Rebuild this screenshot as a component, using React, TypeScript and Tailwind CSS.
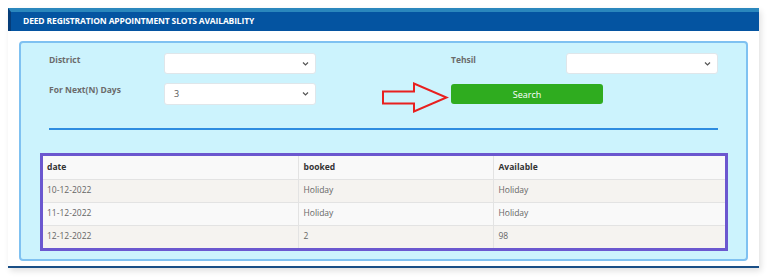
import React from 'react';

const FONT = { fontFamily: '"Open Sans", "Noto Sans", Arial, sans-serif' };

const rows = [
  { date: '10-12-2022', booked: 'Holiday', available: 'Holiday' },
  { date: '11-12-2022', booked: 'Holiday', available: 'Holiday' },
  { date: '12-12-2022', booked: '2', available: '98' },
];

const Chevron = () => (
  <svg width="7" height="5" viewBox="0 0 7 5" className="absolute right-[6px] top-1/2 -translate-y-1/2">
    <path d="M1 1 L3.5 3.5 L6 1" fill="none" stroke="#555" strokeWidth="1.2" />
  </svg>
);

const FakeSelect = ({ value, tall }: { value?: string; tall?: boolean }) => (
  <div className={`relative w-[152px] ${tall ? 'h-[22px]' : 'h-[21px]'} bg-white border border-[#dfe6ea] rounded-[3px] flex items-center pl-[9px] text-[9px] text-[#555]`}>
    {value}
    <Chevron />
  </div>
);

export default function App() {
  return (
    <div className="w-[768px] h-[278px] bg-white pt-[8px] pl-[8px]" style={FONT}>
      <div className="w-[751px] h-[260px] bg-white shadow-[2px_3px_6px_rgba(0,0,0,0.12)] border-b-2 border-[#1a4f86] flex flex-col">
        {/* title bar */}
        <div className="h-[23px] bg-[#0454a1] border-t-[4px] border-t-[#2a87bd] border-l-[3px] border-l-[#053c78] flex items-center pl-[12px]">
          <span className="text-white font-bold text-[8.5px] tracking-[-0.15px] leading-none">
            DEED REGISTRATION APPOINTMENT SLOTS AVAILABILITY
          </span>
        </div>

        {/* panel */}
        <div className="relative mt-[10px] ml-[11px] w-[729px] h-[220px] bg-[#ccf3fd] border-2 border-[#7fc1f1] rounded-[4px] pt-[10px] px-[28px]">
          <div className="grid grid-cols-[267px_267px] gap-x-[135px] gap-y-[9px]">
            <div className="flex items-start">
              <span className="w-[115px] text-[8.5px] font-bold text-[#6b6b6b] pt-[1px]">District</span>
              <FakeSelect />
            </div>
            <div className="flex items-start">
              <span className="w-[115px] text-[8.5px] font-bold text-[#6b6b6b] pt-[1px]">Tehsil</span>
              <FakeSelect />
            </div>
            <div className="flex items-start">
              <span className="w-[115px] text-[8.5px] font-bold text-[#6b6b6b] pt-[1px]">For Next(N) Days</span>
              <FakeSelect value="3" tall />
            </div>
            <div className="flex items-start pt-[1px]">
              <button className="w-[152px] h-[20px] bg-[#2fac1f] rounded-[3px] text-white text-[9px] leading-none">
                Search
              </button>
            </div>
          </div>

          {/* annotation arrow */}
          <svg className="absolute left-[360px] top-[39px]" width="68" height="32" viewBox="0 0 68 32">
            <polygon points="2,9.5 33,9.5 33,1.5 65.5,15.5 33,29.5 33,21.5 2,21.5" fill="none" stroke="#e8201f" strokeWidth="2" strokeLinejoin="miter" />
          </svg>

          <div className="mt-[23px] h-[2px] bg-[#2e8ce0]" />

          {/* results table */}
          <div className="mt-[23px] -ml-[9px] w-[688px] border-[3px] border-[#6b57cf]">
            <table className="w-full border-collapse text-[8.5px]">
              <thead>
                <tr className="h-[23px] bg-[#f9f9f9] border-b border-[#e3e3e3]">
                  <th className="w-[255px] text-left font-bold text-[#333] pl-[4px] border-r border-[#e3e3e3]">date</th>
                  <th className="w-[195px] text-left font-bold text-[#333] pl-[5px] border-r border-[#e3e3e3]">booked</th>
                  <th className="text-left font-bold text-[#333] pl-[5px]">Available</th>
                </tr>
              </thead>
              <tbody>
                {rows.map((r, i) => (
                  <tr key={r.date} className={`h-[23px] ${i % 2 === 0 ? 'bg-[#f5f3f0]' : 'bg-[#f9f9f9]'} ${i < 2 ? 'border-b border-[#e3e3e3]' : ''}`}>
                    <td className="pl-[4px] text-[#666] border-r border-[#e3e3e3]">{r.date}</td>
                    <td className="pl-[5px] text-[#666] border-r border-[#e3e3e3]">{r.booked}</td>
                    <td className="pl-[5px] text-[#666]">{r.available}</td>
                  </tr>
                ))}
              </tbody>
            </table>
          </div>
        </div>
      </div>
    </div>
  );
}
